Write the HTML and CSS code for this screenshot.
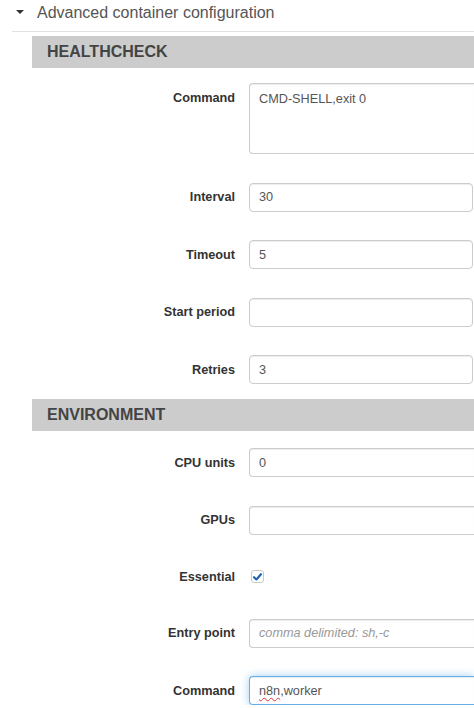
FILE: index.html
```html
<!DOCTYPE html>
<html lang="en">
<head>
    <meta charset="UTF-8">
    <meta name="viewport" content="width=device-width, initial-scale=1.0">
    <title>Advanced container configuration</title>
    <link rel="stylesheet" href="styles.css">
</head>
<body>
    <div class="panel">
        <div class="panel-heading">
            <span class="caret"></span>Advanced container configuration
        </div>

        <div class="panel-body">
            <div class="section">
                <h3 class="section-title">HEALTHCHECK</h3>
                <div class="form-group form-group-top">
                    <label class="control-label">Command</label>
                    <textarea class="form-control textarea wide">CMD-SHELL,exit 0</textarea>
                </div>
                <div class="form-group">
                    <label class="control-label">Interval</label>
                    <input class="form-control input-short" type="text" value="30">
                </div>
                <div class="form-group">
                    <label class="control-label">Timeout</label>
                    <input class="form-control input-short" type="text" value="5">
                </div>
                <div class="form-group">
                    <label class="control-label">Start period</label>
                    <input class="form-control input-short" type="text" value="">
                </div>
                <div class="form-group">
                    <label class="control-label">Retries</label>
                    <input class="form-control input-short" type="text" value="3">
                </div>
            </div>

            <div class="section">
                <h3 class="section-title">ENVIRONMENT</h3>
                <div class="form-group">
                    <label class="control-label">CPU units</label>
                    <input class="form-control wide" type="text" value="0">
                </div>
                <div class="form-group">
                    <label class="control-label">GPUs</label>
                    <input class="form-control wide" type="text" value="">
                </div>
                <div class="form-group form-group-check">
                    <label class="control-label">Essential</label>
                    <span class="checkbox">
                        <svg width="9" height="8" viewBox="0 0 9 8"><path d="M1 4.2 L3.4 6.5 L8 1.2" fill="none" stroke="#1a63b8" stroke-width="2.1" stroke-linecap="round" stroke-linejoin="round"/></svg>
                    </span>
                </div>
                <div class="form-group">
                    <label class="control-label">Entry point</label>
                    <input class="form-control wide" type="text" placeholder="comma delimited: sh,-c">
                </div>
                <div class="form-group">
                    <label class="control-label">Command</label>
                    <div class="form-control wide focused"><span class="misspelled">n8n</span>,worker</div>
                </div>
            </div>
        </div>
    </div>
</body>
</html>
```

FILE: styles.css
```css
html, body {
    margin: 0;
    padding: 0;
    background: #fff;
    overflow: hidden;
}
body {
    font-family: "Liberation Sans", Arial, sans-serif;
    color: #333;
}
.panel-heading {
    margin-left: 12px;
    padding-left: 4px;
    line-height: 26px;
    font-size: 16px;
    color: #555;
    border-bottom: 1px solid #e2e2e2;
    box-sizing: border-box;
    height: 32px;
}
.caret {
    display: inline-block;
    width: 0;
    height: 0;
    border-top: 4px solid #333;
    border-left: 4px solid transparent;
    border-right: 4px solid transparent;
    vertical-align: middle;
    margin-right: 13px;
    position: relative;
    top: -2px;
}
.panel-body {
    margin-left: 32px;
}
.section + .section {
    margin-top: 15px;
}
.section-title {
    margin: 4px 0 15px;
    height: 32px;
    line-height: 32px;
    padding-left: 15px;
    background: #cccccc;
    color: #444;
    font-size: 16px;
    font-weight: bold;
}
.section + .section .section-title {
    margin: 0 0 17px;
}
.form-group {
    display: grid;
    grid-template-columns: 203px 1fr;
    column-gap: 14px;
    align-items: center;
    margin-bottom: 28.5px;
}
.form-group:last-child {
    margin-bottom: 0;
}
.form-group-top {
    align-items: start;
}
.form-group-top .control-label {
    padding-top: 8px;
}
.form-group-check {
    height: 27px;
}
.control-label {
    text-align: right;
    font-size: 12.7px;
    font-weight: bold;
    color: #333;
}
.form-control {
    display: block;
    box-sizing: border-box;
    width: 100%;
    height: 29px;
    margin: 0;
    padding: 0 9px;
    font-family: "Liberation Sans", Arial, sans-serif;
    font-size: 12.7px;
    color: #555;
    background: #fff;
    border: 1px solid #ccc;
    border-radius: 4px;
    box-shadow: inset 0 1px 1px rgba(0, 0, 0, 0.075);
    outline: none;
}
.form-control::placeholder {
    color: #999;
    font-style: italic;
}
/* fields that run on past the right edge of the window */
.wide {
    border-right-width: 0;
    border-top-right-radius: 0;
    border-bottom-right-radius: 0;
}
.input-short {
    width: 224px;
}
.textarea {
    height: 71px;
    padding-top: 8px;
    line-height: 1.2;
    resize: none;
}
div.form-control {
    line-height: 29px;
}
.focused {
    border-color: #66afe9;
    box-shadow: inset 0 1px 1px rgba(0, 0, 0, 0.075), 0 0 8px rgba(102, 175, 233, 0.6);
}
.misspelled {
    text-decoration: underline wavy #d33;
    text-decoration-thickness: 1px;
    text-underline-offset: 2px;
}
.checkbox {
    display: flex;
    align-items: center;
    justify-content: center;
    width: 13px;
    height: 13px;
    margin-left: 2px;
    border: 1px solid #c8c8c8;
    border-radius: 3px;
    box-sizing: border-box;
    background: #fff;
}
```
